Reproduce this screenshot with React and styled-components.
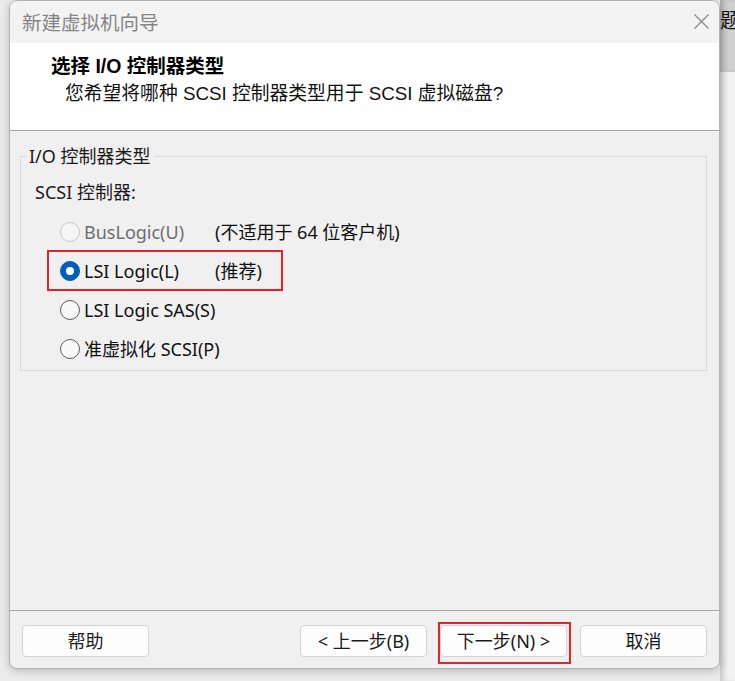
import React from "react";
import styled, { createGlobalStyle } from "styled-components";

const GlobalStyle = createGlobalStyle`
  html, body {
    margin: 0;
    padding: 0;
    width: 735px;
    height: 681px;
    overflow: hidden;
    background: #ececec;
  }
  * {
    box-sizing: border-box;
  }
`;

const UI_FONT = `"Noto Sans", "Noto Sans CJK SC", sans-serif`;

const Desktop = styled.div`
  display: flex;
  width: 735px;
  height: 681px;
  background: #ececec;
`;

const Dialog = styled.div`
  position: relative;
  z-index: 1;
  display: flex;
  flex-direction: column;
  width: 711px;
  height: 669px;
  margin-left: 9px;
  border: 1px solid #b4b4b4;
  border-radius: 8px;
  overflow: hidden;
  background: #f0f0f0;
  box-shadow: 0 2px 10px rgba(0, 0, 0, 0.22);
  font-family: ${UI_FONT};
  color: #1a1a1a;
`;

const BehindWindow = styled.aside`
  flex: 1;
  display: flex;
  flex-direction: column;
  overflow: hidden;
  background: #f2f2f2;
  box-shadow: inset 6px 0 6px -3px rgba(0, 0, 0, 0.18);
`;

const BehindTitle = styled.div`
  height: 72px;
  padding-top: 8px;
  background: #d0d0d0;
  font-family: "Noto Sans CJK SC", sans-serif;
  font-size: 20px;
  line-height: 24px;
  color: #111;
  white-space: nowrap;
  box-shadow: inset 6px 0 6px -3px rgba(0, 0, 0, 0.2);
`;

const TitleBar = styled.div`
  display: flex;
  align-items: center;
  justify-content: space-between;
  height: 42px;
  padding: 0 9px 2px 12px;
  background: #f3f3f3;
`;

const TitleText = styled.span`
  font-family: "Noto Sans CJK SC", sans-serif;
  font-size: 19.5px;
  color: #858585;
`;

const CloseIcon = styled.svg`
  width: 17px;
  height: 17px;
`;

const Header = styled.header`
  height: 88px;
  padding: 11px 0 0 41px;
  background: #ffffff;
  border-bottom: 1px solid #a8a8a8;
`;

const HeaderTitle = styled.div`
  font-family: "Liberation Sans", "Noto Sans CJK SC", sans-serif;
  font-weight: bold;
  font-size: 19.5px;
  line-height: 24px;
  color: #000;
`;

const HeaderSubtitle = styled.div`
  margin-top: 4px;
  padding-left: 14px;
  font-family: "Liberation Sans", "Noto Sans CJK SC", sans-serif;
  font-size: 18.8px;
  line-height: 24px;
  color: #111;
`;

const Body = styled.main`
  flex: 1;
  padding: 13px 12px 0 10px;
  border-bottom: 1px solid #a8a8a8;
`;

const Group = styled.fieldset`
  margin: 0;
  padding: 12px 0 2px 14px;
  border: 1px solid #dadada;
  border-radius: 0;
`;

const GroupLegend = styled.legend`
  margin-left: -8px;
  padding: 0 3px 0 2px;
  font-size: 18px;
  line-height: 24px;
`;

const FieldLabel = styled.div`
  font-size: 18px;
  line-height: 24px;
  margin-bottom: 8px;
`;

const OptionRow = styled.label`
  position: relative;
  display: flex;
  align-items: center;
  width: fit-content;
  height: 39px;
  margin-left: 12px;
  padding-left: 13px;
  padding-right: 21px;
  font-size: 18px;
  white-space: nowrap;

  &::after {
    content: "";
    display: ${(p) => (p.$marked ? "block" : "none")};
    position: absolute;
    left: 0;
    right: 0;
    top: -1px;
    bottom: -1px;
    border: 2px solid #e3232c;
  }
`;

const RadioDot = styled.span`
  flex: none;
  width: 20px;
  height: 20px;
  margin-right: 4px;
  border-radius: 50%;
  border: 1px solid
    ${(p) => (p.$checked ? "#005fb8" : p.$disabled ? "#c9c9c9" : "#5c5c5c")};
  background: ${(p) =>
    p.$checked ? "#005fb8" : p.$disabled ? "#f5f5f5" : "#f9f9f9"};
  display: flex;
  align-items: center;
  justify-content: center;

  &::before {
    content: "";
    display: ${(p) => (p.$checked ? "block" : "none")};
    width: 8px;
    height: 8px;
    border-radius: 50%;
    background: #ffffff;
  }
`;

const OptionName = styled.span`
  min-width: 131px;
  line-height: 24px;
  color: ${(p) => (p.$disabled ? "#6e6e6e" : "#111")};
`;

const OptionNote = styled.span`
  line-height: 24px;
  color: #111;
`;

const Footer = styled.footer`
  display: flex;
  align-items: flex-start;
  height: 57px;
  padding: 14px 12px 0 12px;
`;

const ButtonSlot = styled.div`
  position: relative;
  margin-left: ${(p) => p.$gap || 0}px;

  &::after {
    content: "";
    display: ${(p) => (p.$marked ? "block" : "none")};
    position: absolute;
    left: -2px;
    right: -4px;
    top: -3px;
    bottom: -7px;
    border: 2px solid #e3232c;
  }
`;

const Button = styled.button`
  display: block;
  width: 127px;
  height: 32px;
  padding: 0;
  border: 1px solid #d3d3d3;
  border-radius: 4px;
  background: #fdfdfd;
  font-family: ${UI_FONT};
  font-size: 18px;
  line-height: 22px;
  color: #1a1a1a;
`;

const options = [
  { name: "BusLogic(U)", note: "(不适用于 64 位客户机)", disabled: true },
  { name: "LSI Logic(L)", note: "(推荐)", checked: true, marked: true },
  { name: "LSI Logic SAS(S)" },
  { name: "准虚拟化 SCSI(P)" },
];

const App = () => {
  return (
    <>
      <GlobalStyle />
      <Desktop>
        <Dialog>
          <TitleBar>
            <TitleText>新建虚拟机向导</TitleText>
            <CloseIcon viewBox="0 0 17 17">
              <path
                d="M1.5 1.5 L15.5 15.5 M15.5 1.5 L1.5 15.5"
                stroke="#8a8a8a"
                strokeWidth="1.3"
                fill="none"
              />
            </CloseIcon>
          </TitleBar>

          <Header>
            <HeaderTitle>选择 I/O 控制器类型</HeaderTitle>
            <HeaderSubtitle>
              您希望将哪种 SCSI 控制器类型用于 SCSI 虚拟磁盘?
            </HeaderSubtitle>
          </Header>

          <Body>
            <Group>
              <GroupLegend>I/O 控制器类型</GroupLegend>
              <FieldLabel>SCSI 控制器:</FieldLabel>
              {options.map((opt) => (
                <OptionRow key={opt.name} $marked={opt.marked}>
                  <RadioDot $checked={opt.checked} $disabled={opt.disabled} />
                  <OptionName $disabled={opt.disabled}>{opt.name}</OptionName>
                  {opt.note && <OptionNote>{opt.note}</OptionNote>}
                </OptionRow>
              ))}
            </Group>
          </Body>

          <Footer>
            <ButtonSlot>
              <Button>帮助</Button>
            </ButtonSlot>
            <ButtonSlot $gap={151}>
              <Button>&lt; 上一步(B)</Button>
            </ButtonSlot>
            <ButtonSlot $gap={13} $marked>
              <Button>下一步(N) &gt;</Button>
            </ButtonSlot>
            <ButtonSlot $gap={13}>
              <Button>取消</Button>
            </ButtonSlot>
          </Footer>
        </Dialog>
        <BehindWindow>
          <BehindTitle>题</BehindTitle>
        </BehindWindow>
      </Desktop>
    </>
  );
};

export default App;
